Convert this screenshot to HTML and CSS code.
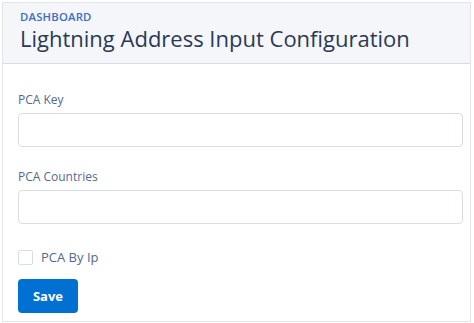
FILE: index.html
```html
<!DOCTYPE html>
<html>
<head>
<meta charset="utf-8">
<link rel="stylesheet" href="styles.css">
</head>
<body>
<div class="frame">
  <div class="header">
    <div class="eyebrow">DASHBOARD</div>
    <h1 class="title">Lightning Address Input Configuration</h1>
  </div>
  <div class="body">
    <div class="field">
      <label class="label">PCA Key</label>
      <input class="input" type="text">
    </div>
    <div class="field">
      <label class="label">PCA Countries</label>
      <input class="input" type="text">
    </div>
    <label class="check">
      <span class="box"></span>
      <span class="check-label">PCA By Ip</span>
    </label>
    <button class="btn">Save</button>
  </div>
</div>
</body>
</html>
```

FILE: styles.css
```css
html, body {
  margin: 0;
  padding: 0;
  background: #ffffff;
}
body {
  font-family: "Open Sans", "Noto Sans", sans-serif;
  width: 474px;
  height: 323px;
  overflow: hidden;
}
.frame {
  margin: 2px 3px 0 2px;
  height: 318px;
  border: 1px solid #e2e5ea;
  display: flex;
  flex-direction: column;
}
.header {
  background: #f4f6f9;
  border-bottom: 1px solid #d8dde6;
  padding: 7px 17px 0 17px;
  height: 53px;
}
.eyebrow {
  font-size: 11.3px;
  line-height: 14px;
  color: #3a6fc4;
  font-weight: 600;
  letter-spacing: 0.2px;
}
.title {
  margin: 0;
  font-size: 22px;
  line-height: 28px;
  font-weight: 400;
  color: #2a3a55;
}
.body {
  flex: 1;
  padding: 27px 7px 0 15px;
  display: flex;
  flex-direction: column;
  align-items: flex-start;
}
.field {
  width: 100%;
  display: flex;
  flex-direction: column;
  margin-bottom: 21px;
}
.label {
  font-size: 12px;
  line-height: 18px;
  color: #54698d;
  margin-bottom: 4px;
}
.input {
  box-sizing: border-box;
  width: 100%;
  height: 34px;
  border: 1px solid #d8dde6;
  border-radius: 4px;
  margin: 0;
  background: #fff;
}
.check {
  display: flex;
  align-items: center;
  gap: 8px;
  margin-top: 3px;
}
.box {
  box-sizing: border-box;
  width: 15px;
  height: 15px;
  border: 1px solid #d8dde6;
  border-radius: 2px;
  background: #fff;
}
.check-label {
  font-size: 13px;
  color: #54698d;
}
.btn {
  margin-top: 13px;
  width: 60px;
  height: 34px;
  border: 0;
  border-radius: 4px;
  background: #0070d2;
  color: #fff;
  font-family: "Open Sans", sans-serif;
  font-weight: 700;
  font-size: 13px;
  padding: 0;
}
```
